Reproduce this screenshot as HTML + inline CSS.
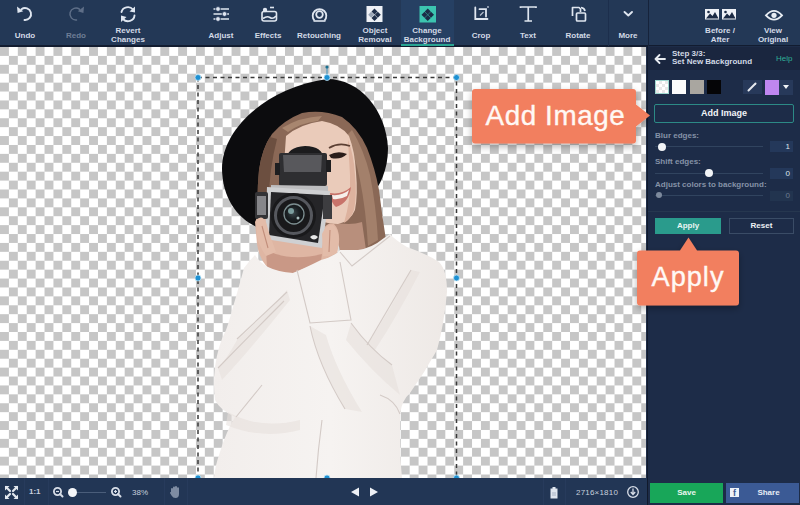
<!DOCTYPE html>
<html><head><meta charset="utf-8">
<style>
*{box-sizing:border-box;margin:0;padding:0}
html,body{width:800px;height:505px;overflow:hidden}
body{position:relative;background:#1d2c48;font-family:"Liberation Sans",sans-serif;color:#e6ebf2}
.a{position:absolute}
#tb{left:0;top:0;width:800px;height:47px;background:#233856;border-bottom:2px solid #121c30}
.lbl{position:absolute;font-size:8px;font-weight:bold;line-height:9px;text-align:center;color:#d3dae6;white-space:nowrap;transform:translateX(-50%)}
.ico{position:absolute}
#cv{left:0;top:47px;width:646px;height:431px;background-color:#fff;
 background-image:conic-gradient(#fff 25%,#c6c6c6 0 50%,#fff 0 75%,#c6c6c6 0);background-size:17.82px 17.82px;background-position:0 0;overflow:hidden}
#pn{left:647px;top:46px;width:153px;height:459px;background:#1d2c48;border-left:1px solid #111a2c}
#bb{left:0;top:478px;width:647px;height:27px;background:#223655}
.sep{position:absolute;width:1px;background:#16233b}
</style></head><body>

<div id="tb" class="a">
  <div class="a" style="left:401px;top:0;width:53px;height:45px;background:#264063"></div>
  <div class="a" style="left:401px;top:44px;width:53px;height:2px;background:#2aa592"></div>
<svg class="a" style="left:0;top:0" width="800" height="46" viewBox="0 0 800 46">
  <g fill="none" stroke="#dfe6f0" stroke-width="1.9" stroke-linecap="round">
    <path d="M21.5 9.2 A6 6 0 1 1 24.5 20"/>
  </g>
  <path d="M17 6.5 L17.6 13 L23.2 11.2 Z" fill="#dfe6f0"/>
  <g fill="none" stroke="#5f6f88" stroke-width="1.5" stroke-linecap="round">
    <path d="M79.5 9.2 A6 6 0 1 0 76.5 20"/>
  </g>
  <path d="M84 6.5 L83.4 13 L77.8 11.2 Z" fill="#5f6f88"/>
  <g fill="none" stroke="#dfe6f0" stroke-width="1.9" stroke-linecap="round">
    <path d="M121.5 12 A6.5 6 0 0 1 133 9.5"/>
    <path d="M134.5 15.5 A6.5 6 0 0 1 123 19"/>
  </g>
  <path d="M135 6.5 V12.5 L129.5 11.5Z M121 22 V15.5 L126.5 17Z" fill="#dfe6f0"/>
  <g stroke="#dfe6f0" stroke-width="1.3" fill="none">
    <path d="M213.5 9 H229 M213.5 14 H229 M213.5 19 H229"/>
  </g>
  <g fill="#dfe6f0" stroke="#213558" stroke-width="0.8">
    <circle cx="218" cy="9" r="2.4"/><circle cx="224.5" cy="14" r="2.4"/><circle cx="218" cy="19" r="2.4"/>
  </g>
  <g fill="none" stroke="#dfe6f0" stroke-width="1.6">
    <rect x="262" y="11.5" width="14.5" height="9.5" rx="2"/>
    <path d="M263 18.5 Q267 15.5 270 17.5 T276 16"/>
    <path d="M270 7.5 H274"/>
  </g>
  <circle cx="265" cy="10" r="2.2" fill="#dfe6f0"/>
  <g fill="none" stroke="#dfe6f0" stroke-width="1.8">
    <path d="M314.5 20.5 A6.8 6.8 0 1 1 324.5 20.5"/>
    <circle cx="319.5" cy="14.5" r="3.3"/>
  </g>
  <path d="M313.5 21 H325.5" stroke="#dfe6f0" stroke-width="1.6"/>
  <rect x="366.5" y="6" width="16" height="16" fill="#eef1f6"/>
  <path d="M374.5 8.5 L377.5 11.5 L374.5 14.5 L371.5 11.5Z M377.8 11.8 L380.8 14.8 L377.8 17.8 L374.8 14.8Z M374.5 15 L377.5 18 L374.5 21 L371.5 18Z" fill="#1f2f4a"/><path d="M371.2 11.8 L374.2 14.8 L371.2 17.8 L368.2 14.8Z" fill="#9ba6b6"/>
  <rect x="419.5" y="6" width="16.5" height="16.5" fill="#3cc4b0"/>
  <path d="M427.75 8.5 L430.75 11.5 L427.75 14.5 L424.75 11.5Z M431 11.8 L434 14.8 L431 17.8 L428 14.8Z M427.75 15 L430.75 18 L427.75 21 L424.75 18Z M424.5 11.8 L427.5 14.8 L424.5 17.8 L421.5 14.8Z" fill="#1b2c47"/>
  <g fill="none" stroke="#dfe6f0" stroke-width="1.8" stroke-linecap="round">
    <path d="M475.3 7.5 V19 H487.5"/>
    <path d="M479.5 9.2 H486 V16.5"/>
  </g>
  <path d="M480 15.5 L483.5 12" stroke="#b9c3d2" stroke-width="1.1"/>
  <circle cx="488" cy="7" r="0.9" fill="#b9c3d2"/>
  <g fill="none" stroke="#dfe6f0" stroke-width="1.7">
    <path d="M520.5 8 V7 H536 V8 M528.25 7 V21 M524.5 21 H532"/>
  </g>
  <g fill="none" stroke="#dfe6f0" stroke-width="1.7" stroke-linejoin="round">
    <path d="M572.5 16 V7.5 H579 L580.5 9 V12"/>
    <rect x="576.5" y="13" width="9" height="8" rx="1"/>
    <path d="M581 7.5 Q584.5 8 585 11"/>
  </g>
  <path d="M624.5 12 L628.3 15.5 L632 12" fill="none" stroke="#dfe6f0" stroke-width="1.9" stroke-linecap="round" stroke-linejoin="round"/>
  <rect x="705" y="9" width="14" height="10.5" fill="#eef1f6"/>
  <path d="M706 18.5 L710 13.5 L712.5 16 L715 12 L718.5 18.5Z" fill="#1b2a44"/>
  <circle cx="708.5" cy="12" r="1.3" fill="#1b2a44"/>
  <rect x="722" y="9" width="14" height="10.5" fill="#eef1f6"/>
  <path d="M723 18.5 L727 13.5 L729.5 16 L732 12 L735.5 18.5Z" fill="#1b2a44"/>
  <circle cx="725.5" cy="12" r="1.3" fill="#1b2a44"/>
  <path d="M766 15.3 Q774 6.5 782 15.3 Q774 24 766 15.3Z" fill="none" stroke="#e8edf3" stroke-width="1.9"/>
  <circle cx="774" cy="15.3" r="2.6" fill="#e8edf3"/>
</svg>
  <div class="lbl" style="left:25px;top:31px">Undo</div>
  <div class="lbl" style="left:76px;top:31px;color:#6e7d95">Redo</div>
  <div class="lbl" style="left:128px;top:26px">Revert<br>Changes</div>
  <div class="lbl" style="left:221px;top:31px">Adjust</div>
  <div class="lbl" style="left:268px;top:31px">Effects</div>
  <div class="lbl" style="left:319px;top:31px">Retouching</div>
  <div class="lbl" style="left:375px;top:26px">Object<br>Removal</div>
  <div class="lbl" style="left:427px;top:26px">Change<br>Background</div>
  <div class="lbl" style="left:481px;top:31px">Crop</div>
  <div class="lbl" style="left:528px;top:31px">Text</div>
  <div class="lbl" style="left:578px;top:31px">Rotate</div>
  <div class="sep" style="left:608px;top:0;height:46px;background:#1c2e4c"></div>
  <div class="lbl" style="left:628px;top:31px">More</div>
  <div class="sep" style="left:648px;top:0;height:46px"></div>
  <div class="lbl" style="left:720px;top:26px">Before /<br>After</div>
  <div class="lbl" style="left:773px;top:26px">View<br>Original</div>
</div>

<div id="cv" class="a"></div>
<div class="a" style="left:0;top:0;width:646px;height:478px;overflow:hidden">
<svg class="a" style="left:0;top:0" width="646" height="478" viewBox="0 0 646 478">
 <defs>
  <linearGradient id="shirtg" x1="0" y1="0" x2="1" y2="0">
   <stop offset="0" stop-color="#f2eeec"/><stop offset="0.5" stop-color="#f6f3f1"/><stop offset="1" stop-color="#eee9e6"/>
  </linearGradient>
  <radialGradient id="lensg" cx="0.45" cy="0.45" r="0.6">
   <stop offset="0" stop-color="#3d4a4e"/><stop offset="0.5" stop-color="#1b2124"/><stop offset="1" stop-color="#0e0f11"/>
  </radialGradient>
 </defs>
 <!-- hat -->
 <path d="M327 79 C360 79 386 110 388 148 C388 170 380 186 370 198 L330 215 L262 229 C240 222 222 200 222 168 C222 130 265 88 327 79Z" fill="#0c0c0e"/>
 <!-- hair -->
 <path d="M259 232 Q256 200 259 170 Q262 148 272 134 Q284 120 302 113 Q322 109 342 117 Q358 128 367 148 Q375 168 379 190 Q382 215 386 240 Q374 249 358 250 L335 232 L300 232 Z" fill="#8a6856"/>
 <path d="M352 130 Q364 150 370 175 Q376 205 378 240 L368 246 Q366 210 360 180 Q355 155 346 136Z" fill="#a3806b"/>
 <path d="M259 232 Q256 200 259 170 Q262 150 270 137 L277 139 Q269 170 269 200 L272 232Z" fill="#6c4f40"/>
 <path d="M282 128 Q300 117 322 116 L318 121 Q300 123 288 132Z" fill="#a8866f"/>
 <!-- neck -->
 <path d="M332 222 Q350 226 362 222 L366 250 L340 250Z" fill="#b88f7c"/>
 <!-- face -->
 <path d="M286 136 Q300 124 322 121 Q340 124 349 136 Q355 152 356 172 Q358 195 355 210 Q350 222 338 224 Q322 224 310 215 Q292 195 284 165Z" fill="#eacbba"/>
 <path d="M348 140 Q354 155 355 175 Q357 195 354 210 Q350 220 344 223 Q351 200 350 175Z" fill="#ddb29e"/>
 <path d="M329 155 Q338 150 347 154 Q341 160 331 158Z" fill="#2a1d1a"/>
 <path d="M329 148 Q339 142 350 146" stroke="#5b3f33" stroke-width="1.8" fill="none"/>
 <path d="M330 193 Q342 195 351 187 Q349 203 336 207 Q331 203 330 193Z" fill="#c8736a"/>
 <path d="M332 195 Q342 196 349 190 L347 196 Q340 200 333 199Z" fill="#f6efeb"/>
 <!-- viewfinder -->
 <path d="M286 160 Q287 147 305 146 Q323 146 324 160Z" fill="#1c1c1e"/>
 <rect x="279" y="153" width="48" height="33" rx="2" fill="#2e2e31"/>
 <path d="M283 155 H322 L321 172 H284Z" fill="#58585c"/>
 <rect x="326" y="160" width="5" height="12" fill="#1e1e20"/>
 <rect x="275" y="163" width="5" height="12" fill="#1e1e20"/>
 <path d="M271 185 L328 186 L328 192 L271 191Z" fill="#bdbdbf"/>
 <!-- hands (behind camera) -->
 <path d="M255 222 Q258 214 265 216 L300 230 L324 228 Q328 222 334 224 Q340 230 339 242 L337 253 Q330 258 321 261 Q306 268 293 273 Q278 273 267 267 Q259 258 257 244Z" fill="#dfb6a3"/>
 <path d="M266 250 Q290 262 322 254 L321 261 Q306 268 293 273 Q278 273 267 267Z" fill="#c99886"/>
 <!-- camera body -->
 <path d="M267 187 L330 191 L322 248 L265 239Z" fill="#cfd0d2"/>
 <path d="M271 192 L325 195 L318 243 L269 235Z" fill="#252528"/>
 <rect x="255" y="192" width="13" height="27" rx="2" fill="#333336"/>
 <rect x="257" y="196" width="9" height="19" fill="#86868a"/>
 <rect x="323" y="195" width="9" height="24" fill="#3d3d40"/>
 <circle cx="293.5" cy="215.5" r="22.5" fill="#19191b"/>
 <circle cx="293.5" cy="215.5" r="18" fill="none" stroke="#56585e" stroke-width="3"/>
 <circle cx="294" cy="214" r="10" fill="url(#lensg)"/>
 <circle cx="294" cy="214" r="10" fill="none" stroke="#7c8e90" stroke-width="1.3"/>
 <circle cx="291" cy="211" r="3" fill="#9cc9c8" opacity="0.7"/>
 <circle cx="298" cy="218" r="1.5" fill="#d0e8e6" opacity="0.8"/>
 <path d="M310 237 Q314 233 318 237 Q314 242 310 237Z" fill="#e8e8e8"/>
 <!-- fingers over camera -->
 <path d="M256 220 Q262 214 266 222 L270 236 Q274 246 276 252 L266 256 Q259 246 257 236Z" fill="#e3bca9"/>
 <path d="M322 234 Q326 224 333 225 Q339 230 339 242 L337 253 Q330 257 323 256Z" fill="#e3bca9"/>
 <path d="M262 226 L268 248 M330 230 L329 252" stroke="#c28e7b" stroke-width="1.1" fill="none"/>
 <!-- shirt -->
 <path d="M255 255 Q250 260 244 268 Q238 290 233 307 Q229 322 226 330 Q218 345 215 367 Q213 385 215 400 Q220 410 235 417 Q226 432 220 452 Q215 466 214 478 L402 478 Q400 460 400 440 L400 414 Q402 400 410 393 Q425 372 437 350 Q444 325 447 292 Q447 270 439 262 Q427 254 407 247 Q395 240 390 234 L384 238 Q372 248 358 250 L340 250 L337 253 Q330 258 321 260 Q305 268 293 273 Q278 272 268 267 Q259 262 255 255Z" fill="url(#shirtg)"/>
 <g fill="#e7e0dc" opacity="0.55">
  <path d="M287 290 Q260 320 237 340 Q226 360 218 368 L222 380 Q250 350 290 300Z"/>
  <path d="M310 326 Q318 365 345 409 L362 412 Q336 370 326 335Z"/>
  <path d="M351 323 Q370 349 392 365 L400 395 Q372 372 346 340Z"/>
  <path d="M411 270 Q390 310 367 345 L375 350 Q398 315 420 272Z"/>
  <path d="M228 412 Q260 430 300 420 L300 430 Q262 440 226 425Z"/>
 </g>
 <g fill="none" stroke="#d3cac6" stroke-width="1.1">
  <path d="M287 292 L237 339"/>
  <path d="M284 301 Q250 335 218 368"/>
  <path d="M297 270 L310 323 L351 320 L340 262"/>
  <path d="M310 326 Q318 365 345 409"/>
  <path d="M351 323 Q370 349 392 365"/>
  <path d="M411 270 L367 345"/>
  <path d="M340 252 L352 266 L390 236"/>
  <path d="M322 420 Q318 450 316 478"/>
  <path d="M236 417 Q250 400 262 385"/>
  <path d="M400 414 Q395 400 380 395"/>
 </g>
 <!-- selection box -->
 <g fill="none" stroke="#3a3a3a" stroke-width="1.5" stroke-dasharray="4 3.5">
  <path d="M198 77.5 H456.5 V477 M198 77.5 V477"/>
 </g>
 <path d="M327 67 V77" stroke="#3a8fb8" stroke-width="1"/>
 <circle cx="327" cy="67" r="1.6" fill="#1b6f8f"/>
 <g fill="#1d90d2" stroke="#bfe3f5" stroke-width="0.8">
  <circle cx="198" cy="77.5" r="3"/><circle cx="327" cy="77.5" r="3"/><circle cx="456.5" cy="77.5" r="3"/>
  <circle cx="198" cy="278" r="3"/><circle cx="456.5" cy="278" r="3"/>
  <circle cx="198" cy="478" r="3"/><circle cx="327" cy="478" r="3"/><circle cx="456.5" cy="478" r="3"/>
 </g>
</svg>
</div>

<div id="pn" class="a">
  <div class="a" style="left:0;top:1px;width:152px;height:23px;background:#1a263f"></div>
  <svg class="a" style="left:6px;top:8px" width="12" height="10" viewBox="0 0 12 10"><path d="M5.5 1 L1.5 5 L5.5 9 M1.5 5 H11" stroke="#e8ecf2" stroke-width="1.8" fill="none" stroke-linecap="round" stroke-linejoin="round"/></svg>
  <div class="a" style="left:24px;top:4px;font-size:8px;font-weight:bold;line-height:8px;color:#d3dae5">Step 3/3:<br>Set New Background</div>
  <div class="a" style="left:128px;top:9px;font-size:8px;line-height:8px;color:#2fae97">Help</div>
  <div class="a" style="left:7px;top:34px;width:14px;height:14px;background:#fff;border:1px solid #9fd8d0;background-image:conic-gradient(#e8e8e8 25%,#fff 0 50%,#e8e8e8 0 75%,#fff 0);background-size:6px 6px"></div>
  <div class="a" style="left:24px;top:34px;width:14px;height:14px;background:#fbfbfb"></div>
  <div class="a" style="left:42px;top:34px;width:14px;height:14px;background:#a9a6a0"></div>
  <div class="a" style="left:59px;top:34px;width:14px;height:14px;background:#050507"></div>
  <div class="a" style="left:95px;top:34px;width:19px;height:14px;background:#27395a"></div>
  <svg class="a" style="left:98px;top:35px" width="12" height="12" viewBox="0 0 12 12"><path d="M2.5 9.5 L9.5 2.5" stroke="#e6eaf0" stroke-width="2" stroke-linecap="round"/></svg>
  <div class="a" style="left:117px;top:34px;width:14px;height:15px;background:#bf86f0"></div>
  <div class="a" style="left:131px;top:34px;width:14px;height:15px;background:#27395a"></div>
  <svg class="a" style="left:134px;top:38px" width="8" height="6" viewBox="0 0 8 6"><path d="M1 1 H7 L4 5 Z" fill="#f0f3f7"/></svg>
  <div class="a" style="left:6px;top:58px;width:140px;height:19px;border:1px solid #2c8a86;border-radius:2px;font-size:9px;font-weight:bold;line-height:17px;text-align:center;color:#f1f4f8">Add Image</div>
  <div class="a" style="left:7px;top:85px;font-size:8px;font-weight:bold;color:#8592a7">Blur edges:</div>
  <div class="a" style="left:7px;top:100px;width:108px;height:1px;background:#31445f"></div>
  <div class="a" style="left:10px;top:97px;width:8px;height:8px;border-radius:50%;background:#f2f4f7"></div>
  <div class="a" style="left:122px;top:95px;width:23px;height:11px;background:#24385a;font-size:8px;line-height:11px;text-align:right;padding-right:3px;color:#dfe5ee">1</div>
  <div class="a" style="left:7px;top:111px;font-size:8px;font-weight:bold;color:#8592a7">Shift edges:</div>
  <div class="a" style="left:7px;top:127px;width:108px;height:1px;background:#31445f"></div>
  <div class="a" style="left:57px;top:123px;width:8px;height:8px;border-radius:50%;background:#f2f4f7"></div>
  <div class="a" style="left:122px;top:122px;width:23px;height:11px;background:#24385a;font-size:8px;line-height:11px;text-align:right;padding-right:3px;color:#dfe5ee">0</div>
  <div class="a" style="left:7px;top:134px;font-size:8px;font-weight:bold;color:#8592a7">Adjust colors to background:</div>
  <div class="a" style="left:7px;top:149px;width:108px;height:1px;background:#31445f"></div>
  <div class="a" style="left:8px;top:146px;width:6px;height:6px;border-radius:50%;background:#7d8a9d"></div>
  <div class="a" style="left:122px;top:145px;width:23px;height:10px;background:#22344f;font-size:8px;line-height:10px;text-align:right;padding-right:3px;color:#6d7b90">0</div>
  <div class="a" style="left:0;top:165px;width:152px;height:1px;background:#26374f"></div>
  <div class="a" style="left:7px;top:172px;width:66px;height:16px;background:#2a9b8c;font-size:8px;font-weight:bold;line-height:16px;text-align:center;color:#e9f5f3">Apply</div>
  <div class="a" style="left:81px;top:172px;width:65px;height:16px;border:1px solid #3a4c66;font-size:8px;font-weight:bold;line-height:14px;text-align:center;color:#eef1f5">Reset</div>
  <div class="a" style="left:2px;top:437px;width:73px;height:20px;background:#18a659;font-size:8px;font-weight:bold;line-height:20px;text-align:center;color:#e8f6ee">Save</div>
  <div class="a" style="left:78px;top:437px;width:73px;height:20px;background:#3b5a95;font-size:8px;font-weight:bold;line-height:20px;text-align:center;color:#e8edf6;padding-left:12px">Share</div>
  <div class="a" style="left:82px;top:442px;width:9px;height:9px;background:#eef2f8"></div>
  <div class="a" style="left:85px;top:443px;font-size:9px;font-weight:bold;line-height:9px;color:#3b5a95">f</div>
</div>

<div id="bb" class="a">
  <svg class="a" style="left:4px;top:7px" width="15" height="15" viewBox="0 0 15 15"><g stroke="#e3e8ef" stroke-width="2.2" stroke-linecap="round" fill="none"><path d="M2 2 L6 6 M13 2 L9 6 M2 13 L6 9 M13 13 L9 9"/></g><g fill="#e3e8ef"><path d="M1 1 H5.5 L1 5.5Z M14 1 H9.5 L14 5.5Z M1 14 H5.5 L1 9.5Z M14 14 H9.5 L14 9.5Z"/></g></svg>
  <div class="sep" style="left:24px;top:0;height:27px;background:#273b5c"></div>
  <div class="a" style="left:29px;top:9px;font-size:8px;font-weight:bold;line-height:9px;color:#c7d0dd">1:1</div>
  <div class="sep" style="left:48px;top:0;height:27px;background:#273b5c"></div>
  <svg class="a" style="left:52px;top:8px" width="12" height="12" viewBox="0 0 12 12"><circle cx="5.5" cy="5.5" r="3.6" stroke="#d8dee8" stroke-width="1.8" fill="none"/><path d="M8 8 L10.5 10.5" stroke="#d8dee8" stroke-width="2" stroke-linecap="round"/><path d="M4 5.5 H7" stroke="#d8dee8" stroke-width="1.2"/></svg>
  <div class="a" style="left:76px;top:14px;width:30px;height:1px;background:#4a5d7a"></div>
  <div class="a" style="left:68px;top:10px;width:9px;height:9px;border-radius:50%;background:#f4f6f9"></div>
  <svg class="a" style="left:110px;top:8px" width="12" height="12" viewBox="0 0 12 12"><circle cx="5.5" cy="5.5" r="3.6" stroke="#d8dee8" stroke-width="1.8" fill="none"/><path d="M8 8 L10.5 10.5" stroke="#d8dee8" stroke-width="2" stroke-linecap="round"/><path d="M4 5.5 H7 M5.5 4 V7" stroke="#d8dee8" stroke-width="1.2"/></svg>
  <div class="a" style="left:132px;top:10px;font-size:8px;line-height:9px;color:#c7d0dd">38%</div>
  <div class="sep" style="left:164px;top:0;height:27px;background:#273b5c"></div>
  <svg class="a" style="left:169px;top:7px" width="12" height="14" viewBox="0 0 12 14"><path d="M2 7 V4 Q2 3 3 3 Q4 3 4 4 V2.5 Q4 1.5 5 1.5 Q6 1.5 6 2.5 V2 Q6 1 7 1 Q8 1 8 2 V3 Q8 2.2 9 2.2 Q10 2.2 10 3.2 V9 Q10 13 6.5 13 Q4 13 2.5 10.5 L1 8 Q0.8 7 2 7Z" fill="#7e8ca2"/></svg>
  <div class="sep" style="left:187px;top:0;height:27px;background:#273b5c"></div>
  <svg class="a" style="left:350px;top:9px" width="30" height="10" viewBox="0 0 30 10"><path d="M9 0.5 V9.5 L1 5Z M20 0.5 V9.5 L28 5Z" fill="#eef1f6"/></svg>
  <div class="sep" style="left:543px;top:0;height:27px;background:#273b5c"></div>
  <svg class="a" style="left:549px;top:8px" width="10" height="13" viewBox="0 0 10 13"><path d="M1.5 2.5 H8.5 V12.5 H1.5Z" fill="#dfe5ee"/><path d="M3.5 1 H6.5 V3 H3.5Z" fill="#dfe5ee"/><path d="M3 7 H7 M3 9 H7" stroke="#9aa6b8" stroke-width="0.8"/></svg>
  <div class="sep" style="left:565px;top:0;height:27px;background:#273b5c"></div>
  <div class="a" style="left:576px;top:10px;font-size:8px;line-height:9px;color:#c7d0dd;letter-spacing:0.2px">2716×1810</div>
  <svg class="a" style="left:626px;top:7px" width="14" height="14" viewBox="0 0 14 14"><circle cx="7" cy="7" r="5.3" stroke="#d8dee8" stroke-width="1.3" fill="none"/><path d="M7 3.5 V9 M4.8 7 L7 9.5 L9.2 7" stroke="#d8dee8" stroke-width="1.3" fill="none"/></svg>
</div>

<svg class="a" style="left:0;top:0" width="800" height="505" viewBox="0 0 800 505">
 <defs><filter id="sh" x="-20%" y="-20%" width="140%" height="160%"><feGaussianBlur in="SourceAlpha" stdDeviation="3.5"/><feOffset dy="3"/><feComponentTransfer><feFuncA type="linear" slope="0.3"/></feComponentTransfer><feMerge><feMergeNode/><feMergeNode in="SourceGraphic"/></feMerge></filter></defs>
 <path d="M475 89 H633 Q636 89 636 92 V104.5 L650 115.5 L636 126.5 V140.5 Q636 143.5 633 143.5 H475 Q472 143.5 472 140.5 V92 Q472 89 475 89Z" fill="#f27f5e" filter="url(#sh)"/>
 <path d="M640 250.5 H680 L688.5 237.5 L697 250.5 H736 Q739 250.5 739 253.5 V302.5 Q739 305.5 736 305.5 H640 Q637 305.5 637 302.5 V253.5 Q637 250.5 640 250.5Z" fill="#f27f5e" filter="url(#sh)"/>
</svg>
<div class="a" id="t1" style="left:485.5px;top:99.5px;font-size:27.8px;line-height:32px;letter-spacing:0.6px;color:#fff8f4;-webkit-text-stroke:0.35px #fff8f4">Add Image</div>
<div class="a" id="t2" style="left:651.5px;top:261px;font-size:27.2px;line-height:32px;letter-spacing:1px;color:#fff8f4;-webkit-text-stroke:0.35px #fff8f4">Apply</div>
</body></html>
